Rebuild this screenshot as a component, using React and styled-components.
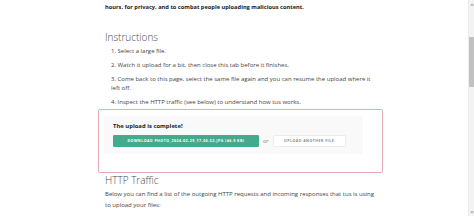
import styled, { createGlobalStyle } from "styled-components";

const GlobalStyle = createGlobalStyle`
  html, body {
    margin: 0;
    padding: 0;
    background: #ffffff;
    overflow: hidden;
  }
  * {
    box-sizing: border-box;
  }
`;

const Page = styled.div`
  width: 474px;
  height: 216px;
  display: flex;
  font-family: "Open Sans", "Noto Sans", sans-serif;
  color: #3f3f3f;
`;

const Main = styled.div`
  flex: 1;
  overflow: hidden;
`;

const Content = styled.div`
  width: 270px;
  margin-left: 105px;
  padding-top: 2.5px;
`;

const Lead = styled.p`
  margin: 0;
  font-size: 5.7px;
  line-height: 9px;
  font-weight: 700;
  color: #222;
  white-space: nowrap;
`;

const Heading = styled.h2`
  margin: ${(p) => p.$top}px 0 0;
  font-size: 10px;
  line-height: 12px;
  font-weight: 300;
  color: #4a4a4a;
`;

const Steps = styled.ol`
  margin: 4.5px 0 0;
  padding: 0 0 0 6px;
  list-style: none;
`;

const Step = styled.li`
  font-size: 6px;
  line-height: 9px;
  margin-bottom: 5px;
  color: #444;
  &:last-child {
    margin-bottom: 0;
  }
`;

const ResultBox = styled.div`
  margin: 1.5px 0 0 -7px;
  width: 285px;
  border: 1px solid #e4acb0;
  border-radius: 2px;
  padding: 6px 19px 18px 5px;
`;

const Panel = styled.div`
  background: #f9f9f9;
  border-radius: 3px;
  padding: 6.5px 9px 7px;
`;

const PanelTitle = styled.div`
  font-size: 5.9px;
  line-height: 9px;
  font-weight: 700;
  color: #1f1f1f;
`;

const Actions = styled.div`
  margin-top: 3.5px;
  display: flex;
  align-items: center;
`;

const Button = styled.div`
  height: 12px;
  width: ${(p) => p.$w}px;
  display: flex;
  align-items: center;
  justify-content: center;
  border-radius: 1px;
  font-size: 3.6px;
  font-weight: 700;
  letter-spacing: 0.45px;
  white-space: nowrap;
  background: ${(p) => (p.$primary ? "#45a98b" : "#ffffff")};
  color: ${(p) => (p.$primary ? "#ffffff" : "#8a8a8a")};
  border: 1px solid ${(p) => (p.$primary ? "#45a98b" : "#ececec")};
`;

const Or = styled.span`
  font-size: 5.6px;
  color: #888;
  margin: 0 4px;
`;

const Paragraph = styled.p`
  margin: 3.5px 0 0;
  font-size: 6px;
  line-height: 11px;
  color: #444;
`;

const Scrollbar = styled.div`
  width: 6px;
  background: #f3f3f3;
  border-left: 1px solid #ececec;
  display: flex;
  flex-direction: column;
  align-items: center;
`;

const Arrow = styled.div`
  height: 8px;
  display: flex;
  align-items: center;
  justify-content: center;
`;

const Track = styled.div`
  flex: 1;
  width: 100%;
  padding-top: 29px;
`;

const Thumb = styled.div`
  height: 50px;
  width: 100%;
  background: #c1c1c1;
`;

const ArrowIcon = ({ down }) => (
  <svg width="4" height="3" viewBox="0 0 4 3">
    <path d={down ? "M0 0.5 L4 0.5 L2 2.5 Z" : "M0 2.5 L4 2.5 L2 0.5 Z"} fill="#a3a3a3" />
  </svg>
);

export default function App() {
  return (
    <>
      <GlobalStyle />
      <Page>
        <Main>
          <Content>
            <Lead>hours, for privacy, and to combat people uploading malicious content.</Lead>
            <Heading $top={19}>Instructions</Heading>
            <Steps>
              <Step>1. Select a large file.</Step>
              <Step>2. Watch it upload for a bit, then close this tab before it finishes.</Step>
              <Step>
                3. Come back to this page, select the same file again and you can resume the upload where it left off.
              </Step>
              <Step>4. Inspect the HTTP traffic (see below) to understand how tus works.</Step>
            </Steps>
            <ResultBox>
              <Panel>
                <PanelTitle>The upload is complete!</PanelTitle>
                <Actions>
                  <Button $primary $w={146}>
                    DOWNLOAD PHOTO_2024-02-29_17-06-52.JPG (46.9 KB)
                  </Button>
                  <Or>or</Or>
                  <Button $w={73}>UPLOAD ANOTHER FILE</Button>
                </Actions>
              </Panel>
            </ResultBox>
            <Heading $top={1}>HTTP Traffic</Heading>
            <Paragraph>
              Below you can find a list of the outgoing HTTP requests and incoming responses that tus is using to
              upload your files:
            </Paragraph>
          </Content>
        </Main>
        <Scrollbar>
          <Arrow>
            <ArrowIcon />
          </Arrow>
          <Track>
            <Thumb />
          </Track>
          <Arrow>
            <ArrowIcon down />
          </Arrow>
        </Scrollbar>
      </Page>
    </>
  );
}
